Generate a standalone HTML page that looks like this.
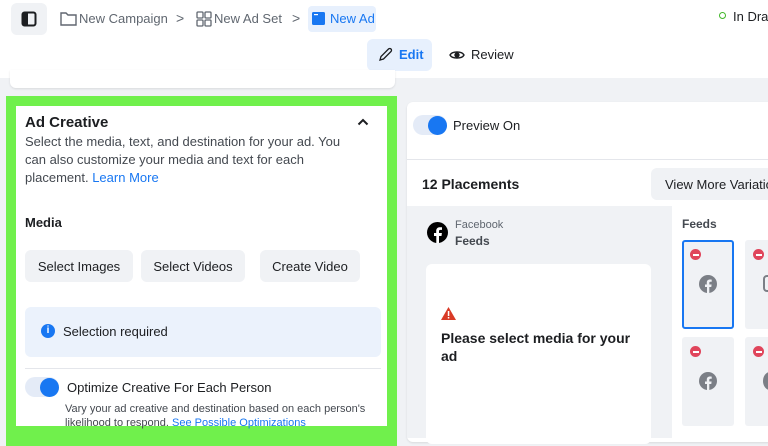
<!DOCTYPE html>
<html><head><style>
*{box-sizing:border-box;margin:0;padding:0}
body{width:768px;height:438px;overflow:hidden;background:#f0f2f5;font-family:"Liberation Sans",sans-serif;color:#1c1e21;position:relative}
.a{position:absolute}
.btn{position:absolute;background:#f0f2f5;border-radius:6px;font-size:13px;color:#1c1e21;display:flex;align-items:center;justify-content:center}
.m{position:absolute;width:11px;height:11px;border-radius:50%;background:#e0455b}
.m::after{content:"";position:absolute;left:2.5px;top:4.5px;width:6px;height:2px;background:#fff}
</style></head><body>
<div class="a" style="left:0;top:0;width:768px;height:78px;background:#fff"></div>
<div class="a" style="left:11px;top:3px;width:36px;height:32px;background:#f0f2f5;border-radius:6px"></div>
<svg class="a" style="left:21px;top:11px" width="16" height="16"><rect x="1.5" y="1.5" width="13" height="13" rx="2" fill="none" stroke="#1c1e21" stroke-width="2"/><rect x="2" y="2" width="5" height="12" fill="#1c1e21"/></svg>
<svg class="a" style="left:60px;top:11px" width="17" height="15"><path d="M1 2h5l2 2h8v10H1z" fill="none" stroke="#606770" stroke-width="1.4"/></svg>
<div class="a" style="left:79px;top:11px;font-size:13px;color:#606770">New Campaign</div>
<div class="a" style="left:176px;top:10px;font-size:14px;color:#606770">&gt;</div>
<svg class="a" style="left:196px;top:11px" width="16" height="16" fill="none" stroke="#606770" stroke-width="1.3"><rect x="1" y="1" width="6" height="6" rx="1"/><rect x="9" y="1" width="6" height="6" rx="1"/><rect x="1" y="9" width="6" height="6" rx="1"/><rect x="9" y="9" width="6" height="6" rx="1"/></svg>
<div class="a" style="left:214px;top:11px;font-size:13px;color:#606770">New Ad Set</div>
<div class="a" style="left:292px;top:10px;font-size:14px;color:#606770">&gt;</div>
<div class="a" style="left:308px;top:6px;width:68px;height:26px;background:#e7f0fd;border-radius:4px"></div>
<svg class="a" style="left:312px;top:12px" width="13" height="13"><rect width="13" height="13" rx="1.5" fill="#1877f2"/><rect x="2" y="2" width="4" height="1.2" fill="#fff"/></svg>
<div class="a" style="left:330px;top:11px;font-size:13px;color:#1877f2">New Ad</div>
<div class="a" style="left:719px;top:12px;width:7px;height:7px;border:1.5px solid #42b72a;border-radius:50%"></div>
<div class="a" style="left:733px;top:9px;font-size:13px;color:#1c1e21;white-space:nowrap">In Draft</div>
<div class="a" style="left:367px;top:39px;width:65px;height:32px;background:#e7f0fd;border-radius:6px"></div>
<svg class="a" style="left:377px;top:47px" width="16" height="16" fill="none" stroke="#1c1e21" stroke-width="1.3"><path d="M3 13l1-3.5 7.5-7.5a1.6 1.6 0 0 1 2.5 2.5L6.5 12z"/></svg>
<div class="a" style="left:399px;top:47px;font-size:13px;font-weight:bold;color:#1877f2">Edit</div>
<svg class="a" style="left:449px;top:48px" width="16" height="14" fill="none" stroke="#1c1e21" stroke-width="1.4"><path d="M1 7c2-4 12-4 14 0c-2 4-12 4-14 0z"/><circle cx="8" cy="7" r="2" fill="#1c1e21"/></svg>
<div class="a" style="left:471px;top:47px;font-size:13px;color:#1c1e21">Review</div>
<div class="a" style="left:10px;top:70px;width:385px;height:18px;background:#fff;border-radius:0 0 6px 6px;box-shadow:0 1px 2px rgba(0,0,0,.1)"></div>

<div class="a" style="left:6px;top:96px;width:391px;height:350px;background:#70f04c"></div>
<div class="a" style="left:16px;top:106px;width:371px;height:320px;background:#fff"></div>
<div class="a" style="left:25px;top:114px;font-size:15px;font-weight:bold">Ad Creative</div>
<svg class="a" style="left:357px;top:118px" width="12" height="8" fill="none" stroke="#1c1e21" stroke-width="2"><path d="M1.5 6.5L6 2l4.5 4.5"/></svg>
<div class="a" style="left:25px;top:133px;width:320px;font-size:13px;line-height:18px;color:#444950">Select the media, text, and destination for your ad. You can also customize your media and text for each placement. <span style="color:#1877f2">Learn More</span></div>
<div class="a" style="left:25px;top:215px;font-size:13px;font-weight:bold">Media</div>
<div class="btn" style="left:25px;top:250px;width:108px;height:32px">Select Images</div>
<div class="btn" style="left:141px;top:250px;width:104px;height:32px">Select Videos</div>
<div class="btn" style="left:260px;top:250px;width:100px;height:32px">Create Video</div>
<div class="a" style="left:25px;top:307px;width:356px;height:50px;background:#ebf2fc;border-radius:6px"></div>
<div class="a" style="left:41px;top:324px;width:14px;height:14px;border-radius:50%;background:#1877f2;color:#fff;font-size:10px;font-weight:bold;text-align:center;line-height:14px">i</div>
<div class="a" style="left:63px;top:324px;font-size:13px">Selection required</div>
<div class="a" style="left:25px;top:368px;width:356px;height:1px;background:#e4e6eb"></div>
<div class="a" style="left:25px;top:377px;width:34px;height:20px;border-radius:10px;background:#e4ebf7"></div>
<div class="a" style="left:40px;top:378px;width:19px;height:19px;border-radius:50%;background:#1877f2"></div>
<div class="a" style="left:67px;top:380px;font-size:13px">Optimize Creative For Each Person</div>
<div class="a" style="left:65px;top:402px;width:315px;font-size:11px;line-height:14px;color:#444950">Vary your ad creative and destination based on each person's likelihood to respond. <span style="color:#1877f2">See Possible Optimizations</span></div>

<div class="a" style="left:407px;top:102px;width:370px;height:340px;background:#fff;border-radius:6px;box-shadow:0 1px 2px rgba(0,0,0,.1)"></div>
<div class="a" style="left:413px;top:115px;width:34px;height:20px;border-radius:10px;background:#e4ebf7"></div>
<div class="a" style="left:428px;top:116px;width:19px;height:19px;border-radius:50%;background:#1877f2"></div>
<div class="a" style="left:453px;top:118px;font-size:13px">Preview On</div>
<div class="a" style="left:407px;top:159px;width:370px;height:1px;background:#e4e6eb"></div>
<div class="a" style="left:422px;top:176px;font-size:14px;font-weight:bold">12 Placements</div>
<div class="btn" style="left:651px;top:168px;width:130px;height:32px;justify-content:flex-start;padding-left:14px;white-space:nowrap">View More Variations</div>
<div class="a" style="left:407px;top:206px;width:265px;height:232px;background:#f0f2f5"></div>
<svg class="a" style="left:427px;top:222px" width="21" height="21"><circle cx="10.5" cy="10.5" r="10.5" fill="#000"/><path d="M12 21v-7h2.5l.4-3H12V9.3c0-.8.3-1.4 1.5-1.4H15V5.3c-.3 0-1.2-.1-2.2-.1-2.1 0-3.6 1.3-3.6 3.7V11H7v3h2.3v7z" fill="#fff"/></svg>
<div class="a" style="left:455px;top:219px;font-size:11px;color:#606770">Facebook</div>
<div class="a" style="left:455px;top:234px;font-size:12px;font-weight:bold;color:#444950">Feeds</div>
<div class="a" style="left:426px;top:264px;width:225px;height:180px;background:#fff;border-radius:6px"></div>
<svg class="a" style="left:441px;top:307px" width="15" height="13"><path d="M7.5 0L15 13H0z" fill="#d93a26"/><rect x="6.8" y="4" width="1.5" height="5" fill="#fff"/><rect x="6.8" y="10" width="1.5" height="1.5" fill="#fff"/></svg>
<div class="a" style="left:441px;top:329px;width:200px;font-size:14px;font-weight:bold;line-height:18px;color:#1c1e21">Please select media for your ad</div>
<div class="a" style="left:682px;top:217px;font-size:12px;font-weight:bold;color:#444950">Feeds</div>
<div class="a" style="left:682px;top:240px;width:52px;height:89px;background:#f0f2f5;border:2px solid #1877f2;border-radius:3px"></div>
<div class="a" style="left:745px;top:240px;width:40px;height:89px;background:#f0f2f5;border-radius:3px"></div>
<div class="a" style="left:682px;top:337px;width:52px;height:89px;background:#f0f2f5;border-radius:3px"></div>
<div class="a" style="left:745px;top:337px;width:40px;height:89px;background:#f0f2f5;border-radius:3px"></div>
<div class="m" style="left:690px;top:249px"></div>
<div class="m" style="left:753px;top:249px"></div>
<div class="m" style="left:690px;top:346px"></div>
<div class="m" style="left:753px;top:346px"></div>
<svg class="a" style="left:699px;top:275px" width="18" height="18"><circle cx="9" cy="9" r="9" fill="#7b7f86"/><path d="M10.3 18v-6h2l.3-2.5h-2.3V8c0-.7.2-1.2 1.2-1.2h1.2V4.6c-.2 0-1-.1-1.9-.1-1.8 0-3 1.1-3 3.1v1.9H6v2.5h2v6z" fill="#f0f2f5"/></svg>
<svg class="a" style="left:699px;top:372px" width="18" height="18"><circle cx="9" cy="9" r="9" fill="#7b7f86"/><path d="M10.3 18v-6h2l.3-2.5h-2.3V8c0-.7.2-1.2 1.2-1.2h1.2V4.6c-.2 0-1-.1-1.9-.1-1.8 0-3 1.1-3 3.1v1.9H6v2.5h2v6z" fill="#f0f2f5"/></svg>
<div class="a" style="left:763px;top:275px;width:10px;height:17px;border:2px solid #7b7f86;border-radius:4px"></div>
<div class="a" style="left:763px;top:372px;width:14px;height:18px;border-radius:50%;background:#7b7f86"></div>
</body></html>
